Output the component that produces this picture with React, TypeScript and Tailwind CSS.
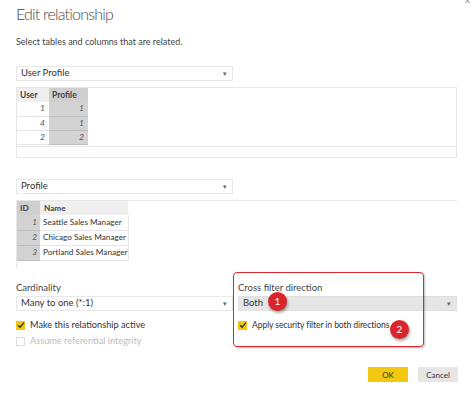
import React from 'react';

const font = { fontFamily: 'Lato, "Open Sans", sans-serif' };

function Caret() {
    return <span className="text-[7px] text-[#666] leading-none">▾</span>;
}

function Dropdown({ label, gray = false, className = '' }: { label: string; gray?: boolean; className?: string }) {
    return (
        <div
            className={`h-[15px] flex items-center justify-between pl-[4px] pr-[5px] border text-[9.5px] text-[#333] ${
                gray ? 'bg-[#e6e6e6] border-[#e0e0e0]' : 'bg-white border-[#e8e8e8]'
            } ${className}`}
        >
            <span>{label}</span>
            <Caret />
        </div>
    );
}

function Check({ on, disabled = false, label, small = false }: { on: boolean; disabled?: boolean; label: string; small?: boolean }) {
    return (
        <div
            className={`flex items-center gap-[5px] h-[16px] ${small ? 'text-[8.6px] tracking-[-0.1px]' : 'text-[9.2px]'} ${
                disabled ? 'text-[#bdbdbd]' : 'text-[#333]'
            }`}
        >
            {on ? (
                <div className="w-[9px] h-[9px] bg-[#f2c811] flex items-center justify-center">
                    <svg width="8" height="8" viewBox="0 0 8 8">
                        <path d="M1 4.2 L3.1 6.2 L7 1.6" stroke="#333" strokeWidth="1.4" fill="none" />
                    </svg>
                </div>
            ) : (
                <div className="w-[9px] h-[9px] border border-[#dcdcdc] bg-white" />
            )}
            <span>{label}</span>
        </div>
    );
}

export default function App() {
    const userRows = [
        [1, 1],
        [4, 1],
        [2, 2],
    ];
    const profileRows = [
        [1, 'Seattle Sales Manager'],
        [2, 'Chicago Sales Manager'],
        [3, 'Portland Sales Manager'],
    ];

    return (
        <div style={font} className="relative w-[474px] h-[397px] bg-white overflow-hidden px-[16px]">
            {/* close glyph, cut off at the top */}
            <div className="absolute right-[4px] top-[-6px] text-[10px] text-[#888] leading-none">x</div>

            <h1 className="pt-[1px] text-[16px] leading-[26px] tracking-[-0.8px] font-light text-[#4a4a4a]">Edit relationship</h1>
            <p className="mt-[9px] text-[9px] leading-[12px] text-[#444]">Select tables and columns that are related.</p>

            {/* Table 1 */}
            <Dropdown label="User Profile" className="mt-[18px] w-[217px]" />
            <div className="mt-[6px] w-[441px] h-[71px] border border-[#e6e6e6] flex flex-col">
                <table className="text-[8.5px] border-collapse">
                    <thead>
                        <tr className="h-[14px]">
                            <th className="w-[32px] bg-[#efefef] text-left pl-[3px] font-bold text-[#444]">User</th>
                            <th className="w-[39px] bg-[#cfcfcf] text-left pl-[3px] font-bold text-[#444]">Profile</th>
                            <th />
                        </tr>
                    </thead>
                    <tbody>
                        {userRows.map(([u, p], i) => (
                            <tr key={i} className="h-[14px]">
                                <td className="text-right pr-[4px] italic text-[#555] border-b border-[#e6e6e6] bg-white">{u}</td>
                                <td className="text-right pr-[4px] italic text-[#555] border-b border-[#bdbdbd] bg-[#d3d3d3]">{p}</td>
                                <td />
                            </tr>
                        ))}
                    </tbody>
                </table>
                <div className="mt-auto mb-[10px] border-t border-[#e6e6e6]" />
            </div>

            {/* Table 2 */}
            <Dropdown label="Profile" className="mt-[21px] w-[217px]" />
            <div className="mt-[6px] w-[441px] h-[68px] border-l border-t border-[#e6e6e6]">
                <table className="text-[8.2px] border-collapse">
                    <thead>
                        <tr className="h-[14px]">
                            <th className="w-[23px] bg-[#cfcfcf] text-left pl-[3px] font-bold text-[#444]">ID</th>
                            <th className="w-[86px] bg-[#efefef] text-left pl-[4px] font-bold text-[#444]">Name</th>
                            <th />
                        </tr>
                    </thead>
                    <tbody>
                        {profileRows.map(([id, name], i) => (
                            <tr key={i} className="h-[15px]">
                                <td className="text-right pr-[3px] italic text-[#555] border-b border-[#bdbdbd] bg-[#d3d3d3]">{id}</td>
                                <td className="pl-[3px] text-[#333] border-b border-r border-[#e6e6e6] bg-white whitespace-nowrap">{name}</td>
                                <td />
                            </tr>
                        ))}
                    </tbody>
                </table>
            </div>

            {/* Options */}
            <div className="mt-[13px] flex gap-[5px]">
                <div className="w-[217px]">
                    <div className="text-[9.5px] leading-[14px] text-[#444]">Cardinality</div>
                    <Dropdown label="Many to one (*:1)" className="mt-[1px]" />
                    <div className="mt-[6px] flex flex-col">
                        <Check on label="Make this relationship active" />
                        <Check on={false} disabled label="Assume referential integrity" />
                    </div>
                </div>
                <div className="w-[219px]">
                    <div className="text-[9.5px] leading-[14px] text-[#444]">Cross filter direction</div>
                    <Dropdown label="Both" gray className="mt-[1px]" />
                    <div className="mt-[6px] flex flex-col">
                        <Check on small label="Apply security filter in both directions" />
                    </div>
                </div>
            </div>

            {/* Buttons */}
            <div className="mt-[18px] flex justify-end gap-[10px]">
                <button className="w-[40px] h-[15px] bg-[#f2c811] text-[8px] text-[#333]">OK</button>
                <button className="w-[40px] h-[15px] bg-[#e6e6e6] text-[8px] text-[#333]">Cancel</button>
            </div>

            {/* Annotation overlay */}
            <div className="absolute left-[233px] top-[272px] w-[191px] h-[75px] border-[1.5px] border-[#e0242b] rounded-[4px] shadow-[1px_1px_2px_rgba(0,0,0,0.25)] pointer-events-none" />
            <div className="absolute left-[268px] top-[292px] w-[19px] h-[19px] rounded-full bg-[#d9262d] text-white text-[10px] flex items-center justify-center shadow-[1px_2px_3px_rgba(0,0,0,0.35)]">
                1
            </div>
            <div className="absolute left-[390px] top-[320px] w-[19px] h-[19px] rounded-full bg-[#d9262d] text-white text-[10px] flex items-center justify-center shadow-[1px_2px_3px_rgba(0,0,0,0.35)]">
                2
            </div>
        </div>
    );
}
